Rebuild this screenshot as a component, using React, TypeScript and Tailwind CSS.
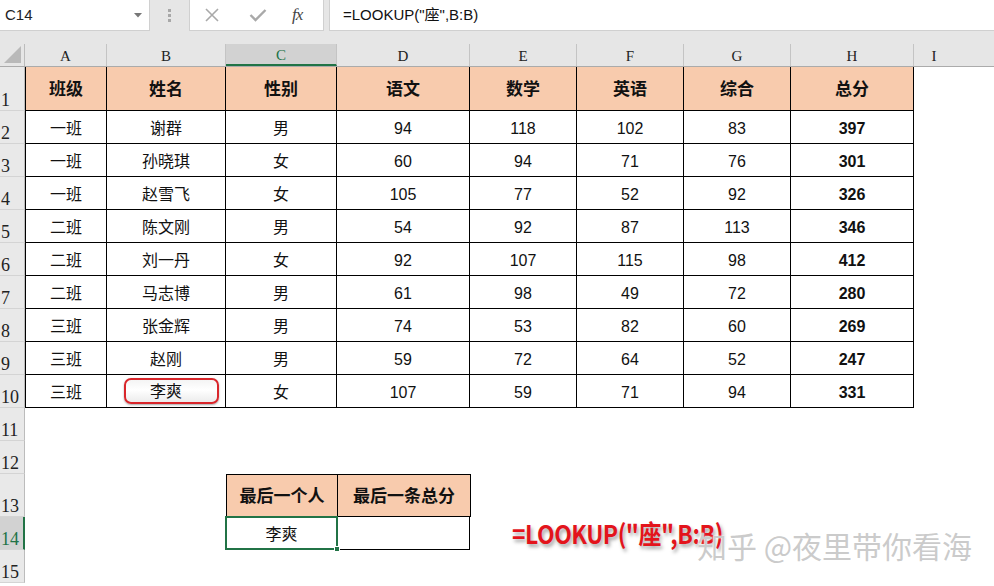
import React from "react";

const letters = ["A", "B", "C", "D", "E", "F", "G", "H"];
const widthCls = ["w-[82px]", "w-[119px]", "w-[111px]", "w-[133px]", "w-[107px]", "w-[107px]", "w-[107px]", "w-[123px]"];

const head = ["班级", "姓名", "性别", "语文", "数学", "英语", "综合", "总分"];
const data = [
  ["一班", "谢群", "男", "94", "118", "102", "83", "397"],
  ["一班", "孙晓琪", "女", "60", "94", "71", "76", "301"],
  ["一班", "赵雪飞", "女", "105", "77", "52", "92", "326"],
  ["二班", "陈文刚", "男", "54", "92", "87", "113", "346"],
  ["二班", "刘一丹", "女", "92", "107", "115", "98", "412"],
  ["二班", "马志博", "男", "61", "98", "49", "72", "280"],
  ["三班", "张金辉", "男", "74", "53", "82", "60", "269"],
  ["三班", "赵刚", "男", "59", "72", "64", "52", "247"],
  ["三班", "李爽", "女", "107", "59", "71", "94", "331"],
];

const cjk = "font-['Liberation_Sans_Narrow','Liberation_Sans','Noto_Sans_CJK_SC',sans-serif]";
const serif = "font-['Liberation_Serif','Noto_Sans_CJK_SC',serif]";

function RowNum({ n, h, active }: { n: number; h: string; active?: boolean }) {
  return (
    <div
      className={`${h} w-[25px] shrink-0 flex items-end pl-[1px] pb-[1px] text-[18px] leading-none ${serif} border-b border-[#d4d4d4] ${
        active ? "bg-[#d2d2d2] text-[#217346] border-r-2 border-r-[#217346]" : "bg-[#e9e9e9] text-[#222] border-r border-r-[#bcbcbc]"
      }`}
    >
      {n}
    </div>
  );
}

export default function App() {
  return (
    <div className={`relative w-[994px] h-[586px] overflow-hidden bg-white ${cjk}`}>
      {/* formula bar */}
      <div className="h-[44px] bg-[#e6e6e6] flex items-start">
        <div className="w-[150px] h-[31px] bg-white border-r border-b border-[#d0d0d0] flex items-center justify-between pl-[5px] pr-[7px]">
          <span className="text-[15px] text-[#222] font-['Liberation_Sans',sans-serif]">C14</span>
          <svg width="8" height="5" viewBox="0 0 8 5">
            <polygon points="0,0 8,0 4,4.5" fill="#777" />
          </svg>
        </div>
        <div className="w-[39px] h-[31px] flex items-center justify-center">
          <div className="flex flex-col gap-[2px]">
            <span className="w-[3px] h-[3px] bg-[#a8a8a8]" />
            <span className="w-[3px] h-[3px] bg-[#a8a8a8]" />
            <span className="w-[3px] h-[3px] bg-[#a8a8a8]" />
          </div>
        </div>
        <div className="w-[135px] h-[31px] bg-white border border-[#d0d0d0] border-t-0 flex items-center">
          <svg className="ml-[14px]" width="16" height="16" viewBox="0 0 16 16">
            <path d="M2 2 L14 14 M14 2 L2 14" stroke="#a9a9a9" strokeWidth="1.6" />
          </svg>
          <svg className="ml-[29px]" width="18" height="14" viewBox="0 0 18 14">
            <path d="M1.5 7 L6.5 12 L16.5 2" stroke="#a9a9a9" strokeWidth="2.4" fill="none" />
          </svg>
          <span className="ml-[25px] text-[17px] italic text-[#444] font-['Liberation_Serif',serif] tracking-[-1px]">fx</span>
        </div>
        <div className="ml-[5px] flex-1 h-[31px] bg-white border-l border-b border-[#d0d0d0] flex items-center pl-[13px]">
          <span className="text-[15px] text-[#111] font-['Liberation_Sans','Noto_Sans_CJK_SC',sans-serif]">=LOOKUP("座",B:B)</span>
        </div>
      </div>

      {/* column header */}
      <div className="h-[23px] flex bg-[#e6e6e6] border-b border-[#ababab]">
        <div className="w-[25px] shrink-0 border-r border-[#bcbcbc] flex items-end justify-end pr-[3px] pb-[3px]">
          <svg width="17" height="17" viewBox="0 0 17 17">
            <polygon points="17,0 17,17 0,17" fill="#b9b9b9" />
          </svg>
        </div>
        {letters.map((l, i) => (
          <div
            key={l}
            className={`${widthCls[i]} shrink-0 flex items-center justify-center pt-[3px] text-[15px] ${serif} border-r border-[#c4c4c4] ${
              i === 2 ? "bg-[#d2d2d2] text-[#217346] border-b-2 border-b-[#217346]" : "text-[#222]"
            }`}
          >
            {l}
          </div>
        ))}
        <div className="flex-1 flex items-center justify-center pt-[3px] pr-[40px] text-[15px] text-[#222] font-['Liberation_Serif',serif]">I</div>
      </div>

      {/* row 1 */}
      <div className="flex">
        <RowNum n={1} h="h-[44px]" />
        {head.map((t, i) => (
          <div
            key={t}
            className={`${widthCls[i]} h-[44px] shrink-0 bg-[#f8cbad] border-r border-b border-black ${
              i === 0 ? "border-l" : ""
            } flex items-center justify-center pt-[3px] text-[17px] font-bold text-[#111]`}
          >
            {t}
          </div>
        ))}
      </div>

      {/* rows 2-10 */}
      {data.map((r, ri) => (
        <div key={ri} className="flex">
          <RowNum n={ri + 2} h="h-[33px]" />
          {r.map((t, i) => (
            <div
              key={i}
              className={`${widthCls[i]} h-[33px] shrink-0 relative border-r border-b border-black ${
                i === 0 ? "border-l" : ""
              } flex items-center justify-center pt-[3px] text-[16px] text-[#111] ${i === 7 ? "font-bold font-['Liberation_Sans',sans-serif]" : ""}`}
            >
              {ri === 8 && i === 1 ? (
                <div className="w-[95px] h-[26px] -mt-[3px] translate-x-[5px] rounded-[7px] border-2 border-[#d9262b] bg-[linear-gradient(#f4f4f4,#ffffff_45%,#ececec)] shadow-[0_1px_2px_rgba(0,0,0,0.35)] flex items-center justify-center pt-[2px] -indent-[10px]">
                  {t}
                </div>
              ) : (
                t
              )}
            </div>
          ))}
        </div>
      ))}

      {/* rows 11-12 */}
      <div className="flex">
        <RowNum n={11} h="h-[33px]" />
      </div>
      <div className="flex">
        <RowNum n={12} h="h-[33px]" />
      </div>

      {/* row 13 */}
      <div className="flex">
        <RowNum n={13} h="h-[43px]" />
        <div className="w-[201px] shrink-0" />
        <div className="w-[112px] h-[43px] shrink-0 bg-[#f8cbad] border border-black flex items-center justify-center pt-[3px] text-[17px] font-bold text-[#111]">
          最后一个人
        </div>
        <div className="w-[133px] h-[43px] shrink-0 bg-[#f8cbad] border-y border-r border-black flex items-center justify-center pt-[3px] text-[17px] font-bold text-[#111]">
          最后一条总分
        </div>
      </div>

      {/* row 14 */}
      <div className="flex">
        <RowNum n={14} h="h-[33px]" active />
        <div className="w-[200px] shrink-0" />
        <div className="relative w-[113px] h-[34px] -mt-[1px] shrink-0 border-2 border-[#217346] flex items-center justify-center pt-[3px] text-[16px] text-[#111]">
          李爽
          <span className="absolute -right-[4px] -bottom-[4px] w-[6px] h-[6px] bg-[#217346] border border-white" />
        </div>
        <div className="w-[132px] h-[33px] shrink-0 border-b border-r border-black" />
      </div>

      {/* row 15 */}
      <div className="flex">
        <RowNum n={15} h="h-[33px]" />
      </div>

      {/* annotation */}
      <div className="absolute left-[512px] top-[513px] origin-left scale-x-[0.88] text-[26px] font-bold text-[#e3141c] tracking-[-0.5px] font-['Liberation_Sans_Narrow','Noto_Sans_CJK_SC',sans-serif] [text-shadow:2px_3px_4px_rgba(0,0,0,0.35)] whitespace-nowrap">
        =LOOKUP("座",B:B)
      </div>

      {/* watermark */}
      <div className="absolute left-[697px] top-[523px] text-[30px] text-[#bdbdbd]/80 font-['Noto_Sans_CJK_SC',sans-serif] [text-shadow:0_0_2px_#fff,0_0_1px_#fff] whitespace-nowrap">
        知乎 @夜里带你看海
      </div>
    </div>
  );
}
